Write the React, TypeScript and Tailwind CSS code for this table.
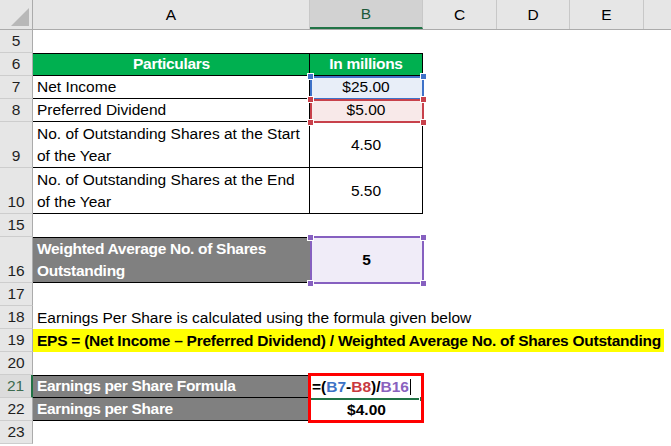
import React from "react";

const FONT = "font-['Liberation_Sans',Arial,sans-serif]";

function RowHead({ n, tall, sel }: { n: number; tall?: boolean; sel?: boolean }) {
  return (
    <div
      className={
        "w-[33px] shrink-0 flex items-end justify-center leading-[22px] border-b border-b-[#cdcdcd] " +
        (tall ? "h-[46px] " : "h-[23px] ") +
        (sel
          ? "bg-[#dcdcdc] text-[#3d6b4f] border-r-2 border-r-[#217346]"
          : "bg-[#e6e6e6] text-[#1f1f1f] border-r border-r-[#ababab]")
      }
    >
      {n}
    </div>
  );
}

function Handle({ cls, color }: { cls: string; color: string }) {
  return <div className={"absolute w-[7px] h-[7px] border border-white " + cls + " " + color} />;
}

export default function App() {
  return (
    <div className={"relative w-[671px] h-[446px] overflow-hidden bg-white text-[15.5px] text-black " + FONT}>
      {/* column header */}
      <div className="flex h-[30px] bg-[#e6e6e6] border-b border-b-[#ababab]">
        <div className="relative w-[33px] shrink-0 border-r border-r-[#ababab]">
          <svg className="absolute right-[3px] bottom-[3px]" width="18" height="18" viewBox="0 0 18 18">
            <polygon points="18,0 18,18 0,18" fill="#b8b8b8" />
          </svg>
        </div>
        <div className="w-[277px] shrink-0 flex items-center justify-center border-r border-r-[#c8c8c8]">A</div>
        <div className="w-[113px] shrink-0 flex items-center justify-center bg-[#d2d2d2] border-r border-r-[#c8c8c8] border-b-2 border-b-[#217346] text-[#1e5a3a]">B</div>
        <div className="w-[74px] shrink-0 flex items-center justify-center border-r border-r-[#c8c8c8]">C</div>
        <div className="w-[73px] shrink-0 flex items-center justify-center border-r border-r-[#c8c8c8]">D</div>
        <div className="w-[74px] shrink-0 flex items-center justify-center border-r border-r-[#c8c8c8]">E</div>
        <div className="w-[27px] shrink-0" />
      </div>

      {/* row 5 */}
      <div className="flex h-[23px]">
        <RowHead n={5} />
      </div>

      {/* row 6 */}
      <div className="flex h-[23px]">
        <RowHead n={6} />
        <div className="w-[277px] shrink-0 flex items-end justify-center leading-[22px] bg-[#00b050] text-white font-bold tracking-[-0.3px] border-t border-b border-black">Particulars</div>
        <div className="w-[114px] shrink-0 -ml-px flex items-end justify-center leading-[22px] bg-[#00b050] text-white font-bold tracking-[-0.3px] border border-black">In millions</div>
      </div>

      {/* row 7 */}
      <div className="flex h-[23px]">
        <RowHead n={7} />
        <div className="w-[277px] shrink-0 flex items-end pl-[4px] leading-[22px] border-b border-black">Net Income</div>
        <div className="w-[114px] shrink-0 -ml-px flex items-end justify-center leading-[22px] bg-[#e8eef8] border-x border-b border-black">$25.00</div>
      </div>

      {/* row 8 */}
      <div className="flex h-[23px]">
        <RowHead n={8} />
        <div className="w-[277px] shrink-0 flex items-end pl-[4px] leading-[22px] border-b border-black">Preferred Dividend</div>
        <div className="w-[114px] shrink-0 -ml-px flex items-end justify-center leading-[22px] bg-[#f8e9e9] border-x border-b border-black">$5.00</div>
      </div>

      {/* row 9 */}
      <div className="flex h-[46px]">
        <RowHead n={9} tall />
        <div className="w-[277px] shrink-0 flex flex-col justify-end pl-[4px] leading-[22px] border-b border-black">
          <span>No. of Outstanding Shares at the Start</span>
          <span>of the Year</span>
        </div>
        <div className="w-[114px] shrink-0 -ml-px flex items-center justify-center border-x border-b border-black">4.50</div>
      </div>

      {/* row 10 */}
      <div className="flex h-[46px]">
        <RowHead n={10} tall />
        <div className="w-[277px] shrink-0 flex flex-col justify-end pl-[4px] leading-[22px] border-b border-black">
          <span>No. of Outstanding Shares at the End</span>
          <span>of the Year</span>
        </div>
        <div className="w-[114px] shrink-0 -ml-px flex items-center justify-center border-x border-b border-black">5.50</div>
      </div>

      {/* row 15 */}
      <div className="flex h-[23px]">
        <RowHead n={15} />
      </div>

      {/* row 16 */}
      <div className="flex h-[46px]">
        <RowHead n={16} tall />
        <div className="w-[277px] shrink-0 flex flex-col justify-end pl-[4px] leading-[22px] bg-[#808080] text-white font-bold tracking-[-0.3px] border-t border-b border-black">
          <span>Weighted Average No. of Shares</span>
          <span>Outstanding</span>
        </div>
        <div className="w-[113px] shrink-0 flex items-center justify-center bg-[#f0ecf8] font-bold">5</div>
      </div>

      {/* row 17 */}
      <div className="flex h-[23px]">
        <RowHead n={17} />
      </div>

      {/* row 18 */}
      <div className="flex h-[23px]">
        <RowHead n={18} />
        <div className="flex items-end pl-[4px] leading-[22px] whitespace-nowrap">
          Earnings Per Share is calculated using the formula given below
        </div>
      </div>

      {/* row 19 */}
      <div className="flex h-[23px]">
        <RowHead n={19} />
        <div className="w-[631px] shrink-0 flex items-end pl-[4px] leading-[22px] whitespace-nowrap bg-[#ffff00] font-bold tracking-[-0.25px]">
          EPS = (Net Income – Preferred Dividend) / Weighted Average No. of Shares Outstanding
        </div>
      </div>

      {/* row 20 */}
      <div className="flex h-[23px]">
        <RowHead n={20} />
      </div>

      {/* row 21 */}
      <div className="flex h-[23px]">
        <RowHead n={21} sel />
        <div className="w-[276px] shrink-0 flex items-end pl-[4px] leading-[22px] bg-[#808080] text-white font-bold tracking-[-0.35px] border-t border-b border-black">
          Earnings per Share Formula
        </div>
        <div className="w-[113px] shrink-0 flex items-end pl-[3px] leading-[22px] font-bold whitespace-nowrap">
          <span>=(</span>
          <span className="text-[#3d72c6]">B7</span>
          <span>-</span>
          <span className="text-[#c9393f]">B8</span>
          <span>)/</span>
          <span className="text-[#8a62be]">B16</span>
          <span className="ml-[1px] mb-[3px] w-px h-[16px] bg-black" />
        </div>
      </div>

      {/* row 22 */}
      <div className="flex h-[23px]">
        <RowHead n={22} />
        <div className="w-[277px] shrink-0 flex items-end pl-[4px] leading-[22px] bg-[#808080] text-white font-bold tracking-[-0.35px] border-b border-black">
          Earnings per Share
        </div>
        <div className="w-[113px] shrink-0 flex items-end justify-center leading-[22px] font-bold">$4.00</div>
      </div>

      {/* row 23 */}
      <div className="flex h-[23px]">
        <RowHead n={23} />
      </div>

      {/* reference highlight: B7 */}
      <div className="absolute left-[310px] top-[76px] w-[114px] h-[24px] border-2 border-[#3f72c8]" />
      <Handle cls="left-[307px] top-[73px]" color="bg-[#3f72c8]" />
      <Handle cls="left-[420px] top-[73px]" color="bg-[#3f72c8]" />
      {/* reference highlight: B8 */}
      <div className="absolute left-[310px] top-[99px] w-[114px] h-[24px] border-2 border-[#c8414b]" />
      <Handle cls="left-[307px] top-[96px]" color="bg-[#c8414b]" />
      <Handle cls="left-[420px] top-[96px]" color="bg-[#c8414b]" />
      <Handle cls="left-[307px] top-[119px]" color="bg-[#c8414b]" />
      <Handle cls="left-[420px] top-[119px]" color="bg-[#c8414b]" />
      {/* reference highlight: B16 */}
      <div className="absolute left-[310px] top-[236px] w-[114px] h-[48px] border-2 border-[#8660c0]" />
      <Handle cls="left-[307px] top-[234px]" color="bg-[#8660c0]" />
      <Handle cls="left-[420px] top-[234px]" color="bg-[#8660c0]" />
      <Handle cls="left-[307px] top-[280px]" color="bg-[#8660c0]" />
      <Handle cls="left-[420px] top-[280px]" color="bg-[#8660c0]" />

      {/* active cell bottom line + fill handle */}
      <div className="absolute left-[310px] top-[398px] w-[110px] h-[2px] bg-[#217346]" />
      <div className="absolute left-[419px] top-[396px] w-[6px] h-[6px] bg-[#217346] border border-white" />

      {/* red annotation box */}
      <div className="absolute left-[308px] top-[373px] w-[116px] h-[50px] border-[3px] border-[#ff0000]" />
    </div>
  );
}
